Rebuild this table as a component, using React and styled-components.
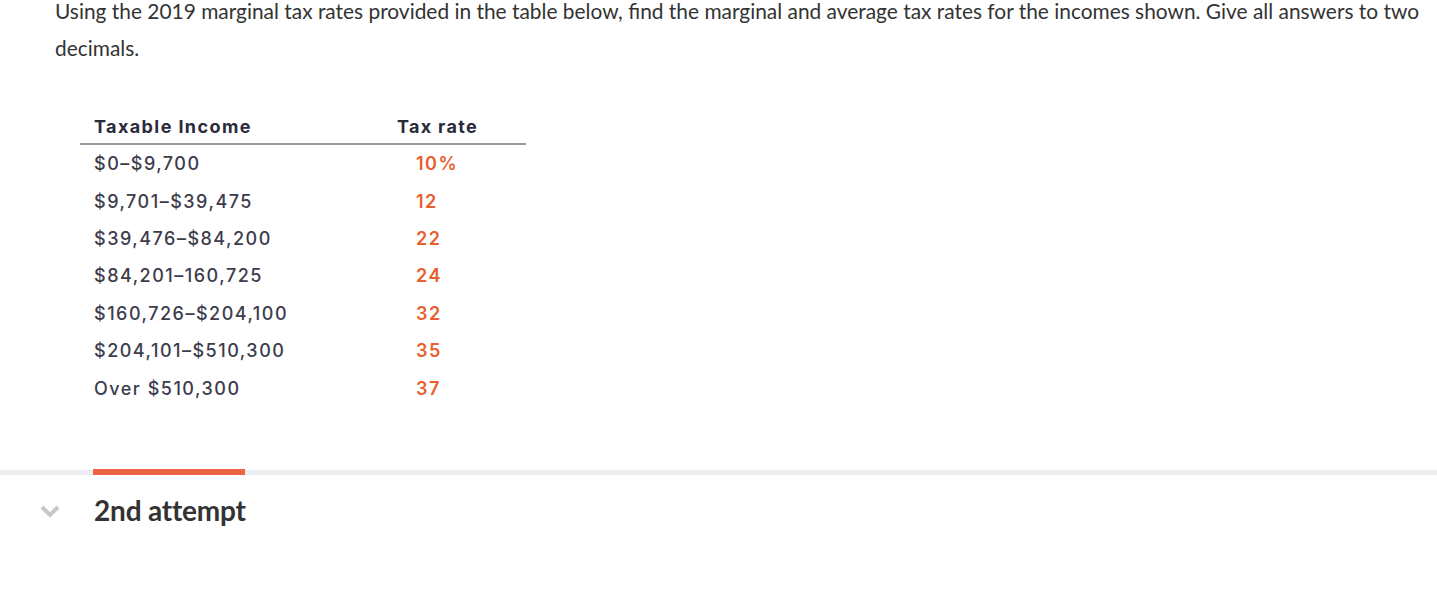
import styled, { createGlobalStyle } from 'styled-components'

const GlobalStyle = createGlobalStyle`
  html, body {
    margin: 0;
    padding: 0;
    background: #fff;
  }
  body {
    font-family: Lato, "Liberation Sans", sans-serif;
    color: #333;
    overflow: hidden;
  }
`

const rows = [
  ['$0–$9,700', '10%'],
  ['$9,701–$39,475', '12'],
  ['$39,476–$84,200', '22'],
  ['$84,201–160,725', '24'],
  ['$160,726–$204,100', '32'],
  ['$204,101–$510,300', '35'],
  ['Over $510,300', '37'],
]

const App = () => {
  return (
    <Page>
      <GlobalStyle />
      <Question>
        Using the 2019 marginal tax rates provided in the table below, find the marginal and average tax rates for the incomes shown. Give all answers to two decimals.
      </Question>

      <RateTable>
        <HeadRow>
          <IncomeCell head>Taxable Income</IncomeCell>
          <RateHead>Tax rate</RateHead>
        </HeadRow>
        {rows.map(([income, rate]) => (
          <BodyRow key={income}>
            <IncomeCell>{income}</IncomeCell>
            <RateCell>{rate}</RateCell>
          </BodyRow>
        ))}
      </RateTable>

      <TabBar>
        <ActiveTab />
      </TabBar>

      <AttemptHeader>
        <Chevron viewBox="0 0 20 13">
          <path d="M2 2 L10 10 L18 2" fill="none" stroke="#c8c8c8" strokeWidth="4" />
        </Chevron>
        <AttemptTitle>2nd attempt</AttemptTitle>
      </AttemptHeader>
    </Page>
  )
}

const Page = styled.div`
  width: 1437px;
  height: 606px;
  overflow: hidden;
`

const Question = styled.p`
  margin: -8px 0 0 0;
  padding: 0 0 0 55px;
  font-size: 20.9px;
  line-height: 37px;
  color: #333;
`

const RateTable = styled.div`
  margin: 44px 0 0 80px;
  width: 446px;
  font-family: Inter, "DejaVu Sans", sans-serif;
`

const HeadRow = styled.div`
  display: flex;
  align-items: center;
  height: 33px;
  border-bottom: 2px solid #9a9a9a;
`

const BodyRow = styled.div`
  display: flex;
  align-items: center;
  height: 37.4px;
`

const IncomeCell = styled.div`
  width: 303px;
  padding-left: 14px;
  font-size: 18px;
  font-weight: ${(p) => (p.head ? 700 : 500)};
  letter-spacing: ${(p) => (p.head ? '1.4px' : '1.5px')};
  color: ${(p) => (p.head ? '#2b2b3c' : '#3c3c4c')};
`

const RateHead = styled.div`
  font-size: 18px;
  font-weight: 700;
  color: #2b2b3c;
  letter-spacing: 1.3px;
`

const RateCell = styled.div`
  padding-left: 19px;
  font-size: 18px;
  font-weight: 600;
  letter-spacing: 1.5px;
  color: #e8602e;
`

const TabBar = styled.div`
  position: relative;
  margin-top: 63px;
  height: 5px;
  background: #eeeeee;
`

const ActiveTab = styled.div`
  position: absolute;
  left: 93px;
  top: -1px;
  width: 152px;
  height: 6px;
  background: #ec6443;
`

const AttemptHeader = styled.div`
  display: flex;
  align-items: center;
  padding-left: 40px;
  margin-top: 19px;
  height: 32px;
`

const Chevron = styled.svg`
  width: 20px;
  height: 13px;
  margin-right: 34px;
  margin-top: 4px;
`

const AttemptTitle = styled.h2`
  margin: 0;
  font-size: 28px;
  font-weight: 700;
  color: #333;
  letter-spacing: -0.2px;
`

export default App
